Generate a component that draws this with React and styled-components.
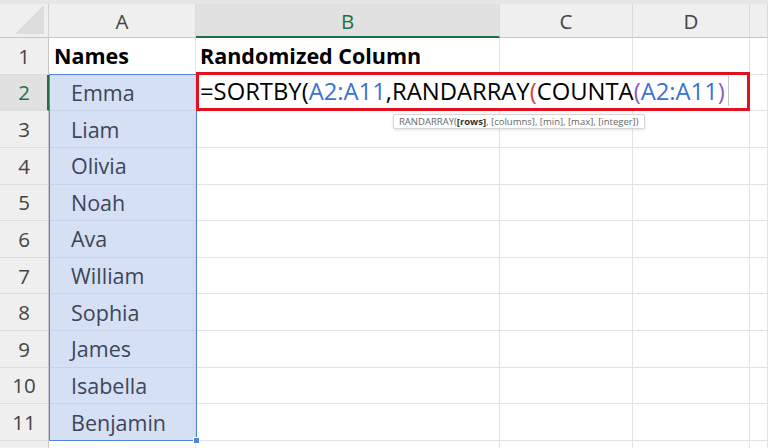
import React from "react";
import styled, { createGlobalStyle } from "styled-components";

const Global = createGlobalStyle`
  html, body { margin: 0; padding: 0; background: #ffffff; overflow: hidden; }
  body { font-family: "Open Sans", "Noto Sans", sans-serif; }
`;

const ROW_H = 36.64;
const COLS = [49, 147, 304, 133, 117];

const Page = styled.div`
  width: 768px;
  height: 448px;
  overflow: hidden;
  background: #e6e6e6;
  padding-top: 4px;
  box-sizing: border-box;
`;

const Sheet = styled.div`
  position: relative;
  display: grid;
  grid-template-columns: ${COLS.map((c) => c + "px").join(" ")} 1fr;
  grid-template-rows: 34px repeat(12, ${ROW_H}px);
  background: #ffffff;
`;

const Corner = styled.div`
  background: #efefef;
  border-right: 1px solid #d2d2d2;
  border-bottom: 1px solid #c6c6c6;
  box-sizing: border-box;
  display: flex;
  align-items: flex-end;
  justify-content: flex-end;
  padding: 0 2px 2px 0;
`;

const ColHead = styled.div`
  background: ${(p) => (p.$active ? "#e1e1e1" : "#efefef")};
  border-right: 1px solid #dadada;
  border-bottom: ${(p) => (p.$active ? "2px solid #1e7145" : "1px solid #c6c6c6")};
  box-sizing: border-box;
  display: flex;
  align-items: center;
  justify-content: center;
  font-size: 20.5px;
  color: ${(p) => (p.$active ? "#1e7145" : "#444444")};
  padding-top: ${(p) => (p.$active ? "1px" : "0")};
`;

const RowHead = styled.div`
  background: ${(p) => (p.$active ? "#e1e1e1" : "#efefef")};
  border-right: ${(p) => (p.$active ? "2px solid #1e7145" : "1px solid #c6c6c6")};
  border-bottom: 1px solid #dcdcdc;
  box-sizing: border-box;
  display: flex;
  align-items: center;
  justify-content: center;
  font-size: 20.5px;
  color: ${(p) => (p.$active ? "#1e7145" : "#444444")};
  padding-left: ${(p) => (p.$active ? "1px" : "0")};
`;

const Cell = styled.div`
  background: ${(p) => (p.$selected ? "#d6e0f4" : "#ffffff")};
  border-right: 1px solid ${(p) => (p.$selected ? "#c9d3e6" : "#e2e2e2")};
  border-bottom: 1px solid ${(p) => (p.$selected ? "#c9d3e6" : "#e2e2e2")};
  box-sizing: border-box;
  display: flex;
  align-items: center;
  white-space: nowrap;
  overflow: visible;
  font-size: 21.5px;
  font-weight: ${(p) => (p.$bold ? 700 : 400)};
  color: ${(p) => (p.$selected ? "#3d4658" : "#000000")};
  padding-left: ${(p) => p.$indent}px;
`;

const Selection = styled.div`
  position: absolute;
  left: ${COLS[0]}px;
  top: ${34 + ROW_H - 1}px;
  width: ${COLS[1] + 1}px;
  height: ${ROW_H * 10 + 1}px;
  box-sizing: border-box;
  border: 1.5px solid #4f86dc;
  pointer-events: none;
`;

const Handle = styled.div`
  position: absolute;
  right: -4px;
  bottom: -4px;
  width: 5px;
  height: 5px;
  background: #4f86dc;
  border: 1px solid #ffffff;
`;

const Editor = styled.div`
  position: absolute;
  left: ${COLS[0] + COLS[1]}px;
  top: ${34 + ROW_H - 3}px;
  width: ${COLS[2] + COLS[3] + COLS[4]}px;
  height: ${ROW_H + 3}px;
  box-sizing: border-box;
  border: 3px solid #e3101e;
  background: #ffffff;
  display: flex;
  align-items: center;
  padding-left: 1px;
  font-size: 23.8px;
  white-space: nowrap;
  color: #000000;
`;

const Tok = styled.span`
  color: ${(p) => p.$c || "#000000"};
`;

const Caret = styled.span`
  display: inline-block;
  width: 1px;
  height: 30px;
  background: #c8c8c8;
  margin-left: 3px;
`;

const Tip = styled.div`
  position: absolute;
  left: 393px;
  top: ${114 - 4}px;
  height: 15px;
  box-sizing: border-box;
  padding: 0 5px;
  background: #ffffff;
  border: 1px solid #d6d6d6;
  border-radius: 2px;
  box-shadow: 0 1px 3px rgba(0, 0, 0, 0.12);
  font-size: 9.5px;
  line-height: 13px;
  color: #666666;
  white-space: nowrap;
  z-index: 3;
`;

const TipBold = styled.b`
  color: #333333;
  font-weight: 700;
`;

const names = ["Emma", "Liam", "Olivia", "Noah", "Ava", "William", "Sophia", "James", "Isabella", "Benjamin"];
const letters = ["A", "B", "C", "D", ""];

export default function App() {
  const rows = [];
  for (let r = 1; r <= 12; r++) {
    rows.push(
      <RowHead key={"h" + r} $active={r === 2}>
        {r <= 11 ? r : ""}
      </RowHead>
    );
    for (let c = 0; c < 5; c++) {
      let text = "";
      let bold = false;
      let indent = 6;
      let selected = false;
      if (r === 1 && c === 0) { text = "Names"; bold = true; indent = 5; }
      if (r === 1 && c === 1) { text = "Randomized Column"; bold = true; indent = 4; }
      if (c === 0 && r >= 2 && r <= 11) { text = names[r - 2]; indent = 22; selected = true; }
      rows.push(
        <Cell key={r + "-" + c} $bold={bold} $indent={indent} $selected={selected}>
          {text}
        </Cell>
      );
    }
  }
  return (
    <Page>
      <Global />
      <Sheet>
        <Corner>
          <svg width="31" height="30" viewBox="0 0 31 30">
            <polygon points="0,29 29,0 29,29" fill="#dcdcdc" />
          </svg>
        </Corner>
        {letters.map((l, i) => (
          <ColHead key={i} $active={i === 1}>{l}</ColHead>
        ))}
        {rows}
        <Selection>
          <Handle />
        </Selection>
        <Editor>
          <Tok>=SORTBY(</Tok>
          <Tok $c="#3a72d6">A2:A11</Tok>
          <Tok>,RANDARRAY</Tok>
          <Tok $c="#d6453d">(</Tok>
          <Tok>COUNTA</Tok>
          <Tok $c="#8b5cc4">(</Tok>
          <Tok $c="#3a72d6">A2:A11</Tok>
          <Tok $c="#8b5cc4">)</Tok>
          <Caret />
        </Editor>
        <Tip>
          RANDARRAY(<TipBold>[rows]</TipBold>, [columns], [min], [max], [integer])
        </Tip>
      </Sheet>
    </Page>
  );
}
